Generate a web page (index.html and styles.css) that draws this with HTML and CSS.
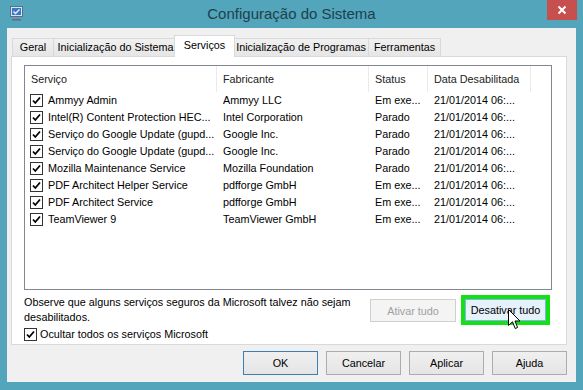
FILE: index.html
```html
<!DOCTYPE html>
<html>
<head>
  <title>Configuração do Sistema</title>
  <link rel="stylesheet" href="styles.css">
</head>
<body>
  <div class="window">
    <div class="titlebar">
      <svg class="app-icon" width="16" height="16" viewBox="0 0 16 16">
        <rect x="1.5" y="1.5" width="12" height="10" fill="#d8e4f0" stroke="#5a6f8c"/>
        <rect x="3" y="3" width="9" height="7" fill="#3a78c8"/>
        <path d="M4.5 6.5 L6.5 8.5 L10.5 4.5" stroke="#e8f2ff" stroke-width="1.4" fill="none"/>
        <rect x="5" y="12" width="5" height="2" fill="#7d8ea3"/>
        <rect x="3" y="14" width="9" height="1.5" fill="#5a6f8c"/>
      </svg>
      <div class="title">Configuração do Sistema</div>
      <div class="close">
        <svg width="10" height="10" viewBox="0 0 10 10">
          <path d="M1.5 1.5 L8.5 8.5 M8.5 1.5 L1.5 8.5" stroke="#fff" stroke-width="2"/>
        </svg>
      </div>
    </div>

    <div class="client">
      <div class="tabs">
        <div class="tab tab-geral">Geral</div>
        <div class="tab tab-sistema">Inicialização do Sistema</div>
        <div class="tab tab-servicos active">Serviços</div>
        <div class="tab tab-programas">Inicialização de Programas</div>
        <div class="tab tab-ferramentas">Ferramentas</div>
      </div>

      <div class="panel">
        <div class="list">
          <div class="list-head">
            <div class="col">Serviço</div>
            <div class="col">Fabricante</div>
            <div class="col">Status</div>
            <div class="col">Data Desabilitada</div>
          </div>
          <div class="list-body">
            <div class="row">
              <div class="col"><span class="box"></span>Ammyy Admin</div>
              <div class="col">Ammyy LLC</div>
              <div class="col">Em exe...</div>
              <div class="col">21/01/2014 06:...</div>
            </div>
            <div class="row">
              <div class="col"><span class="box"></span>Intel(R) Content Protection HEC...</div>
              <div class="col">Intel Corporation</div>
              <div class="col">Parado</div>
              <div class="col">21/01/2014 06:...</div>
            </div>
            <div class="row">
              <div class="col"><span class="box"></span>Serviço do Google Update (gupd...</div>
              <div class="col">Google Inc.</div>
              <div class="col">Parado</div>
              <div class="col">21/01/2014 06:...</div>
            </div>
            <div class="row">
              <div class="col"><span class="box"></span>Serviço do Google Update (gupd...</div>
              <div class="col">Google Inc.</div>
              <div class="col">Parado</div>
              <div class="col">21/01/2014 06:...</div>
            </div>
            <div class="row">
              <div class="col"><span class="box"></span>Mozilla Maintenance Service</div>
              <div class="col">Mozilla Foundation</div>
              <div class="col">Parado</div>
              <div class="col">21/01/2014 06:...</div>
            </div>
            <div class="row">
              <div class="col"><span class="box"></span>PDF Architect Helper Service</div>
              <div class="col">pdfforge GmbH</div>
              <div class="col">Em exe...</div>
              <div class="col">21/01/2014 06:...</div>
            </div>
            <div class="row">
              <div class="col"><span class="box"></span>PDF Architect Service</div>
              <div class="col">pdfforge GmbH</div>
              <div class="col">Em exe...</div>
              <div class="col">21/01/2014 06:...</div>
            </div>
            <div class="row">
              <div class="col"><span class="box"></span>TeamViewer 9</div>
              <div class="col">TeamViewer GmbH</div>
              <div class="col">Em exe...</div>
              <div class="col">21/01/2014 06:...</div>
            </div>
          </div>
        </div>

        <div class="panel-foot">
          <div class="note">
            <p>Observe que alguns serviços seguros da Microsoft talvez não sejam desabilitados.</p>
            <div class="hide-ms"><span class="box"></span>Ocultar todos os serviços Microsoft</div>
          </div>
          <div class="foot-buttons">
            <button class="btn btn-wide" disabled>Ativar tudo</button>
            <div class="highlight">
              <button class="btn btn-hover">Desativar tudo</button>
            </div>
          </div>
        </div>
      </div>

      <div class="buttons">
        <button class="btn btn-default">OK</button>
        <button class="btn">Cancelar</button>
        <button class="btn">Aplicar</button>
        <button class="btn">Ajuda</button>
      </div>
    </div>

    <svg class="cursor" width="13" height="21" viewBox="0 0 13 21">
      <path d="M0.5 0.5 L0.5 16.5 L4.5 12.8 L7.2 19.5 L9.6 18.5 L7 12 L12 12 Z" fill="#fff" stroke="#000" stroke-width="1"/>
    </svg>
  </div>
</body>
</html>
```

FILE: styles.css
```css
body {
  margin: 0;
  font-family: "Liberation Sans", Arial, sans-serif;
  font-size: 10.8px;
  color: #000;
}

.window {
  position: relative;
  width: 583px;
  height: 390px;
  box-sizing: border-box;
  padding: 0 7px 8px 7px;
  background-color: #52a5ba;
  display: flex;
  flex-direction: column;
}

/* title bar */
.titlebar {
  height: 28px;
  display: grid;
  grid-template-columns: 1fr auto 1fr;
  align-items: start;
}

.app-icon {
  margin: 5px 0 0 2px;
}

.title {
  padding-top: 5px;
  font-size: 15px;
  color: #1f3f4d;
}

.close {
  justify-self: end;
  width: 30px;
  height: 20px;
  margin-right: -1px;
  background-color: #c7504f;
  display: flex;
  align-items: center;
  justify-content: center;
}

/* dialog body */
.client {
  flex: 1;
  display: flex;
  flex-direction: column;
  background-color: #f0f0f0;
  padding: 7px 9px 7px 4px;
}

.tabs {
  display: flex;
  height: 22px;
  margin-left: 1px;
}

.tab {
  height: 19px;
  margin-top: 3px;
  box-sizing: border-box;
  border: 1px solid #d9d9d9;
  border-bottom: none;
  margin-right: -1px;
  background: linear-gradient(#f0f0f0, #e5e5e5);
  text-align: center;
  line-height: 17px;
  color: #000;
}

.tab-geral { width: 42px; }
.tab-sistema { width: 125px; }
.tab-servicos { width: 57px; }
.tab-programas { width: 136px; }
.tab-ferramentas { width: 73px; }

.tab.active {
  position: relative;
  z-index: 1;
  height: 22px;
  margin: 0 -2px 0 -3px;
  width: 61px;
  background: #fff;
  line-height: 19px;
}

.panel {
  flex: 1;
  margin-top: -1px;
  background-color: #fff;
  border: 1px solid #d9d9d9;
  padding: 8px 14px 0 12px;
  display: flex;
  flex-direction: column;
}

/* services list */
.list {
  height: 225px;
  box-sizing: border-box;
  border: 1px solid #828790;
  background-color: #fff;
}

.list-head,
.row {
  display: grid;
  grid-template-columns: 192px 152px 59px 1fr;
}

.list-head {
  height: 25px;
  line-height: 26px;
  color: #222;
}

.list-head .col {
  border-right: 1px solid #eaeaea;
  padding-left: 6px;
}

.list-head .col:last-child {
  margin-right: 20px;
}

.list-body {
  padding-top: 1px;
}

.row {
  height: 17px;
  line-height: 17px;
}

.row .col {
  padding-left: 6px;
  white-space: nowrap;
  overflow: hidden;
}

.row .col:first-child {
  padding-left: 5px;
  display: flex;
  align-items: center;
}

.box {
  width: 13px;
  height: 13px;
  box-sizing: border-box;
  border: 1px solid #333;
  background: #fff url("data:image/svg+xml;utf8,<svg xmlns='http://www.w3.org/2000/svg' width='11' height='11'><path d='M2 5.5 L4.3 8 L9 2.5' stroke='black' stroke-width='1.8' fill='none'/></svg>") no-repeat center;
  margin-right: 5px;
  flex-shrink: 0;
}

/* below the list */
.panel-foot {
  display: flex;
  justify-content: space-between;
  padding-top: 5px;
}

.note p {
  margin: 0;
  width: 340px;
  line-height: 15px;
}

.hide-ms {
  display: flex;
  align-items: center;
  height: 16px;
  margin-top: 1px;
}

.hide-ms .box {
  margin-right: 3px;
}

.foot-buttons {
  display: flex;
  align-items: flex-start;
  gap: 5px;
  margin-right: 2px;
}

.btn {
  font-family: inherit;
  font-size: 10.8px;
  width: 75px;
  height: 24px;
  padding: 0;
  border: 1px solid #acacac;
  background: linear-gradient(#f0f0f0, #e5e5e5);
  color: #000;
}

.btn-wide {
  width: 86px;
  height: 23px;
  margin-top: 4px;
}

.btn:disabled {
  color: #a0a0a0;
  border-color: #d0d0d0;
  background: #f4f4f4;
}

.highlight {
  padding: 4px;
  background-color: #14e014;
}

.btn-hover {
  width: 81px;
  height: 22px;
  border-color: #7eb4ea;
  background: #e5f1fb;
}

.btn-default {
  border-color: #3c7fb1;
}

/* dialog buttons */
.buttons {
  display: flex;
  justify-content: flex-end;
  gap: 8px;
  margin-top: 6px;
}

.cursor {
  position: absolute;
  left: 508px;
  top: 309px;
}
```
